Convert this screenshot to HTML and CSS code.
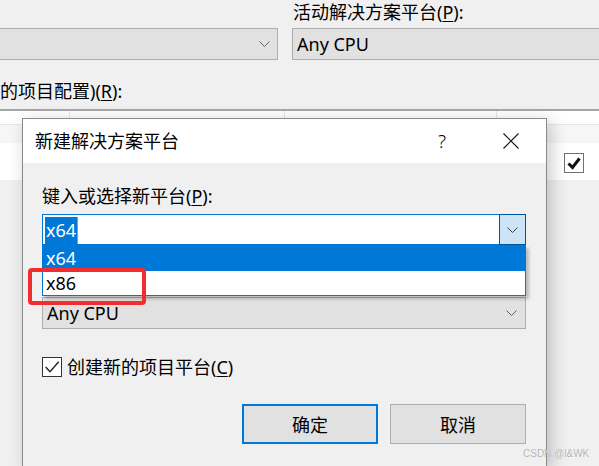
FILE: index.html
```
<!DOCTYPE html>
<html lang="zh-CN">
<head>
<meta charset="utf-8">
<title>新建解决方案平台</title>
<link rel="stylesheet" href="styles.css">
</head>
<body>
<div class="page">
  <div class="top">
    <div class="col">
      <div class="lbl"></div>
      <div class="combo combo-left">
        <svg class="chev" width="11" height="6" viewBox="0 0 11 6"><polyline points="0.5,0.5 5.5,5.5 10.5,0.5" fill="none" stroke="#606060" stroke-width="1"/></svg>
      </div>
    </div>
    <div class="col">
      <div class="lbl lbl-right">活动解决方案平台(<u>P</u>):</div>
      <div class="combo combo-right">Any CPU</div>
    </div>
  </div>
  <div class="lbl lbl-cfg">的项目配置)(<u>R</u>):</div>
  <div class="grid">
    <div class="ghead">
      <div class="gcell"></div>
      <div class="gcell"></div>
      <div class="gcell"></div>
      <div class="gcell gcell-last"></div>
    </div>
    <div class="gband"></div>
    <div class="grow">
      <div class="gcheck">
        <svg width="18" height="18" viewBox="0 0 18 18"><polyline points="3.5,9.5 7.5,13.5 14.5,4.5" fill="none" stroke="#111" stroke-width="3"/></svg>
      </div>
    </div>
  </div>
</div>

<div class="dialog">
  <div class="titlebar">
    <div class="title">新建解决方案平台</div>
    <div class="tb-btn tb-help">?</div>
    <div class="tb-btn tb-close">
      <svg width="16" height="16" viewBox="0 0 16 16"><path d="M0.5 0.5 L15.5 15.5 M15.5 0.5 L0.5 15.5" stroke="#111" stroke-width="1.1" fill="none"/></svg>
    </div>
  </div>
  <div class="dbody">
    <div class="lbl">键入或选择新平台(<u>P</u>):</div>
    <div class="combo-edit">
      <span class="sel">x64</span>
      <div class="dd-btn">
        <svg width="11" height="6" viewBox="0 0 11 6"><polyline points="0.5,0.5 5.5,5.5 10.5,0.5" fill="none" stroke="#404040" stroke-width="1"/></svg>
      </div>
      <div class="list">
        <div class="opt opt-hi">x64</div>
        <div class="opt">x86</div>
      </div>
    </div>
    <div class="spacer"></div>
    <div class="combo combo-copy">Any CPU
      <svg class="chev chev-copy" width="11" height="6" viewBox="0 0 11 6"><polyline points="0.5,0.5 5.5,5.5 10.5,0.5" fill="none" stroke="#606060" stroke-width="1"/></svg>
    </div>
    <div class="check-row">
      <div class="cbox">
        <svg width="18" height="18" viewBox="0 0 18 18"><polyline points="2.7,9 7,13.7 15.7,3.7" fill="none" stroke="#222" stroke-width="1.4"/></svg>
      </div>
      <div class="lbl">创建新的项目平台(<u>C</u>)</div>
    </div>
    <div class="buttons">
      <div class="btn btn-default">确定</div>
      <div class="btn">取消</div>
    </div>
  </div>
</div>

<div class="annot"></div>
<div class="watermark">CSDN @l&amp;WK</div>
</body>
</html>
```
FILE: styles.css
```
* { box-sizing: border-box; }
html, body {
  margin: 0;
  padding: 0;
  width: 599px;
  height: 466px;
  overflow: hidden;
}
body {
  position: relative;
  background: #f0f0f0;
  color: #000;
  font-family: "Noto Sans", "Noto Sans CJK SC", sans-serif;
  font-size: 18px;
}
u { text-decoration-thickness: 1px; text-underline-offset: 2px; }

.lbl {
  height: 24px;
  line-height: 24px;
  white-space: nowrap;
}

/* background property page */
.top {
  display: grid;
  grid-template-columns: 278px 307px;
  column-gap: 14px;
}
.col { min-width: 0; }
.lbl-right { padding-left: 1px; }
.combo {
  height: 32px;
  margin-top: 4px;
  background: #e1e1e1;
  border: 1px solid #adadad;
  display: flex;
  align-items: center;
  padding-left: 4px;
  white-space: nowrap;
}
.combo-left { border-left: none; }
.combo-right { border-right: none; }
.chev { margin-left: auto; margin-right: 7px; }
.lbl-cfg { margin-top: 19px; }

.grid {
  margin-top: 6px;
  border-top: 2px solid #a6a6a6;
}
.ghead {
  height: 14px;
  background: #fff;
  display: grid;
  grid-template-columns: 70px 215px 212px 1fr;
  border-bottom: 1px solid #e6e6e6;
}
.gcell { border-right: 1px solid #e6e6e6; }
.gcell-last { border-right: none; }
.gband { height: 18px; background: #f6f6f6; }
.grow {
  height: 37px;
  background: #fff;
  display: flex;
  justify-content: flex-end;
  align-items: flex-start;
  padding: 10px 15px 0 0;
}
.gcheck {
  width: 20px;
  height: 20px;
  border: 1px solid #707070;
  background: #fff;
  display: flex;
  align-items: center;
  justify-content: center;
}

/* dialog */
.dialog {
  position: absolute;
  left: 22px;
  top: 118px;
  width: 525px;
  height: 349px;
  border: 1px solid #8a8a8a;
  border-bottom: none;
  background: #f0f0f0;
  box-shadow: 4px 4px 16px rgba(0, 0, 0, 0.22);
}
.titlebar {
  height: 44px;
  background: #fff;
  display: flex;
  align-items: center;
  padding-left: 12px;
}
.title { flex: 1; line-height: 24px; }
.tb-btn {
  width: 46px;
  height: 44px;
  display: flex;
  align-items: center;
  justify-content: center;
}
.tb-help { margin-right: 23px; font-weight: 300; font-size: 19px; }
.tb-close { margin-right: 12px; }

.dbody { padding: 21px 20px 0 19px; }

.combo-edit {
  position: relative;
  margin-top: 6px;
  height: 31px;
  border: 1px solid #0078d7;
  background: #fff;
  display: flex;
}
.sel {
  margin: 2px 0 0 2px;
  height: 27px;
  line-height: 27px;
  padding: 0 1px;
  background: #0078d7;
  color: #fff;
  border-right: 1px solid #e08a2a;
}
.dd-btn {
  margin: -1px -1px -1px auto;
  width: 27px;
  background: #cce4f7;
  border: 1px solid #005499;
  display: flex;
  align-items: center;
  justify-content: center;
}
.list {
  position: absolute;
  top: calc(100% + 1px);
  left: -1px;
  right: -1px;
  border: 1px solid #0078d7;
  border-top: none;
  background: #fff;
  box-shadow: 3px 3px 3px rgba(0, 0, 0, 0.22);
  z-index: 2;
}
.opt {
  height: 24px;
  line-height: 24px;
  padding-left: 3px;
}
.opt-hi {
  height: 26px;
  line-height: 26px;
  background: #0078d7;
  color: #fff;
}
.spacer { height: 52px; }
.combo-copy { margin-top: 0; }
.chev-copy { margin-right: 8px; }

.check-row {
  margin-top: 26px;
  display: flex;
  align-items: center;
  gap: 5px;
}
.cbox {
  width: 20px;
  height: 20px;
  border: 1px solid #333;
  background: #fff;
  display: flex;
  align-items: center;
  justify-content: center;
}

.buttons {
  margin-top: 25px;
  display: flex;
  justify-content: flex-end;
  gap: 12px;
}
.btn {
  width: 136px;
  height: 40px;
  background: #e1e1e1;
  border: 1px solid #adadad;
  display: flex;
  align-items: center;
  justify-content: center;
}
.btn-default { border: 2px solid #0078d7; }

/* overlays */
.annot {
  position: absolute;
  left: 28px;
  top: 268px;
  width: 118px;
  height: 37px;
  border: 4px solid #f32d2d;
  border-radius: 4px;
  z-index: 5;
}
.watermark {
  position: absolute;
  left: 523px;
  top: 448px;
  font-family: "Liberation Sans", sans-serif;
  font-size: 10px;
  color: #b4b4b4;
  text-shadow: 0 0 1px #fff;
  white-space: nowrap;
  z-index: 5;
}
```
